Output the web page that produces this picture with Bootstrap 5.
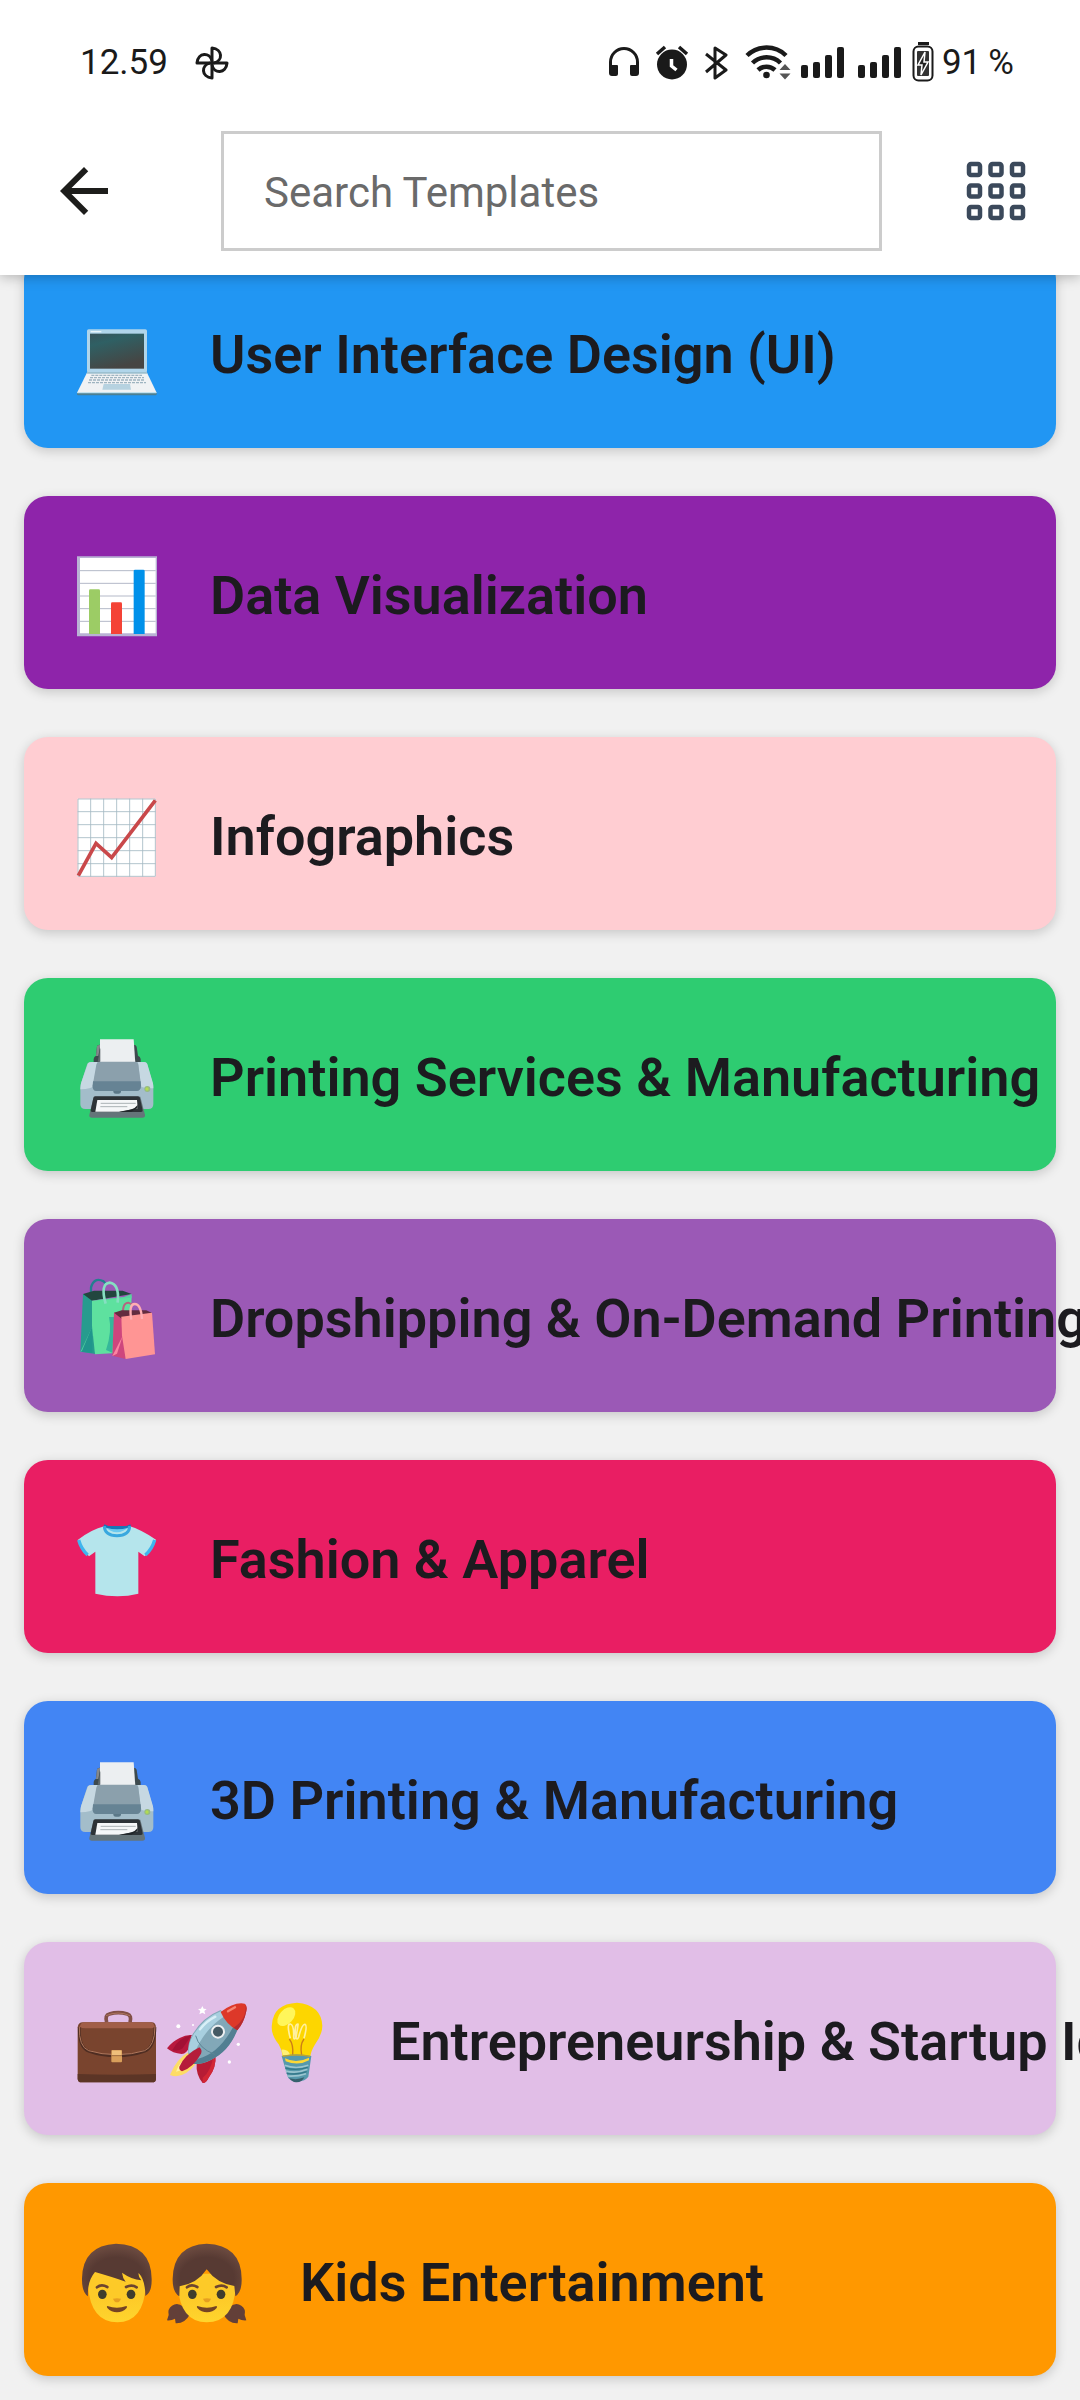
<!DOCTYPE html>
<html lang="en">
<head>
<meta charset="utf-8">
<meta name="viewport" content="width=device-width, initial-scale=1">
<title>Search Templates</title>
<link rel="stylesheet" href="https://cdn.jsdelivr.net/npm/bootstrap@5.3.0/dist/css/bootstrap.min.css">
<style>
  body { font-family: Roboto, "Liberation Sans", sans-serif; background: #f1f1f1; color: #1c1b1f; }
  svg { display: block; flex: none; }
  .app-header { background: #fff; box-shadow: 0 2px 12px rgba(0,0,0,.26); }
  .status-bar { height: 107px; padding: 18px 66px 0 80px; font-size: 35px; line-height: 44px; color: #1a1a1a; }
  .toolbar { padding: 24px 53px 24px 48px; }
  .icon-button { border: 0; padding: 0; background: none; color: #1d1d1b; }
  .search-box { height: 120px; margin: 0 83px 0 101px; padding: 2px 40px 0; border: 3px solid #ccc; border-radius: 0; font-size: 42px; color: #1c1b1f; background: #fff; }
  .search-box::placeholder { color: #6a6a6a; opacity: 1; }
  .category-list { margin-top: -20px; padding: 0 24px 24px; gap: 48px; overflow-x: clip; }
  .category { height: 193px; padding-left: 48px; border: 0; border-radius: 24px; box-shadow: 0 3px 12px rgba(0,0,0,.18); color: #1c1b1f; }
  .category-name { margin-left: 48px; padding-top: 6px; font-size: 54px; line-height: 64px; font-weight: 600; }
  .bg-ui { background: #2196f3; }
  .bg-data { background: #8e24aa; }
  .bg-info-pink { background: #ffcdd2; }
  .bg-print { background: #2ecc71; }
  .bg-drop { background: #9b59b6; }
  .bg-fashion { background: #e91e63; }
  .bg-three { background: #4285f4; }
  .bg-startup { background: #e1bee7; }
  .bg-kids { background: #ff9800; }
</style>
<script src="https://cdn.jsdelivr.net/npm/bootstrap@5.3.0/dist/js/bootstrap.bundle.min.js"></script>
</head>
<body>
<header class="app-header sticky-top">
  <div class="status-bar d-flex align-items-center">
    <span>12.59</span>
    <svg class="ms-4" width="40" height="40" viewBox="-20 -20 40 40" fill="none" stroke="#1a1a1a" stroke-width="3" stroke-linejoin="round" aria-hidden="true">
      <g id="blade"><path d="M0 0V-15C11-14 11-2 2 0"/></g>
      <use href="#blade" transform="rotate(90)"/><use href="#blade" transform="rotate(180)"/><use href="#blade" transform="rotate(270)"/>
    </svg>
    <div class="d-flex align-items-center gap-2 ms-auto">
      <svg width="32" height="44" viewBox="0 0 32 44" aria-hidden="true"><path d="M2.500 28V21a13.500 13.500 0 0 1 27 0V28" fill="none" stroke="#1a1a1a" stroke-width="3"/><path d="M1 24h8a1 1 0 0 1 1 1v8a2 2 0 0 1-2 2H4a3 3 0 0 1-3-3zM31 24h-8a1 1 0 0 0-1 1v8a2 2 0 0 0 2 2h4a3 3 0 0 0 3-3z" fill="#1a1a1a"/></svg>
      <svg width="48" height="44" viewBox="0 0 48 44" aria-hidden="true"><circle cx="24" cy="23.500" r="15" fill="#1a1a1a"/><path d="M9 13l8-7M39 13l-8-7" stroke="#1a1a1a" stroke-width="3.500"/><path d="M23.500 18v7l5 4" fill="none" stroke="#fff" stroke-width="3.500"/></svg>
      <svg width="24" height="44" viewBox="0 0 24 44" fill="none" stroke="#1a1a1a" stroke-width="3" stroke-linejoin="round" aria-hidden="true"><path d="M2 13l20 16-11 8V7l11 7L2 31"/></svg>
      <svg width="56" height="44" viewBox="0 0 56 44" fill="none" stroke="#1a1a1a" stroke-width="4.500" aria-hidden="true"><path d="M11 14.500a28 28 0 0 1 39 0M16.500 22a20 20 0 0 1 28 0M22 29a12.500 12.500 0 0 1 17 0"/><circle cx="30.500" cy="34" r="3.300" fill="#1a1a1a" stroke="none"/><path d="M43.500 29l5.500-6 5.500 6zM43.500 32.500l5.500 6 5.500-6z" fill="#555" stroke="none"/></svg>
      <svg width="46" height="44" viewBox="0 0 46 44" fill="#1a1a1a" aria-hidden="true"><rect x="1" y="24" width="7" height="13" rx="2"/><rect x="13" y="21" width="7" height="16" rx="2"/><rect x="25" y="14" width="7" height="23" rx="2"/><rect x="37" y="6" width="7" height="31" rx="2"/></svg>
      <svg width="50" height="44" viewBox="0 0 50 44" fill="#1a1a1a" aria-hidden="true"><rect x="4" y="24" width="7" height="13" rx="2"/><rect x="16" y="21" width="7" height="16" rx="2"/><rect x="28" y="14" width="7" height="23" rx="2"/><rect x="40" y="6" width="7" height="31" rx="2"/></svg>
      <svg width="22" height="44" viewBox="0 0 22 44" aria-hidden="true"><rect x="6" y="1" width="11" height="3" fill="#1a1a1a"/><rect x="1.500" y="5.500" width="19" height="34" rx="5" fill="none" stroke="#1a1a1a" stroke-width="2"/><rect x="5" y="10" width="12" height="25" rx="1" fill="#333"/><path d="M13 11L6 24h4l-1 10 7-13h-4z" fill="#222" stroke="#fff" stroke-width="1.500"/></svg>
      <span>91&thinsp;%</span>
    </div>
  </div>
  <nav class="toolbar d-flex align-items-center" aria-label="Templates">
    <button type="button" class="icon-button" aria-label="Back">
      <svg width="72" height="72" viewBox="0 0 24 24" fill="currentColor"><path d="M20 11H7.830l5.590-5.590L12 4l-8 8 8 8 1.410-1.410L7.830 13H20v-2z"/></svg>
    </button>
    <input type="search" class="search-box form-control flex-grow-1 w-auto" placeholder="Search Templates" aria-label="Search Templates">
    <button type="button" class="icon-button" aria-label="All categories">
      <svg width="62" height="62" viewBox="0 0 62 62" fill="none" stroke="#3b495b" stroke-width="4.500">
        <rect x="4" y="4" width="11" height="11" rx="2"/><rect x="25.500" y="4" width="11" height="11" rx="2"/><rect x="47" y="4" width="11" height="11" rx="2"/>
        <rect x="4" y="25.500" width="11" height="11" rx="2"/><rect x="25.500" y="25.500" width="11" height="11" rx="2"/><rect x="47" y="25.500" width="11" height="11" rx="2"/>
        <rect x="4" y="47" width="11" height="11" rx="2"/><rect x="25.500" y="47" width="11" height="11" rx="2"/><rect x="47" y="47" width="11" height="11" rx="2"/>
      </svg>
    </button>
  </nav>
</header>

<main class="category-list d-flex flex-column">
  <a href="#ui" class="category bg-ui card flex-row align-items-center text-nowrap text-decoration-none">
    <svg width="90" height="90" viewBox="216 110 270 270" aria-hidden="true">
      <defs><linearGradient id="screen" x1="0" y1="0" x2=".4" y2="1"><stop offset="0" stop-color="#37535a"/><stop offset=".3" stop-color="#2f6064"/><stop offset="1" stop-color="#464543"/></linearGradient></defs>
      <path d="M231 367h239v5q0 3-4 3H235q-4 0-4-3z" fill="#4b7f92"/>
      <rect x="261" y="177" width="180" height="130" rx="5" fill="#b0d5ea"/>
      <rect x="270" y="190" width="162" height="105" fill="url(#screen)"/>
      <path d="M272 184h32" stroke="#e8f5fb" stroke-width="4"/>
      <path d="M262 305h178l30 62H231z" fill="#f0f2f4"/><path d="M262 305h178l3 5H259z" fill="#9cc0d0"/>
      <path d="M274 315h152M270 322h162M267 329h168M264 337h174" stroke="#9eb4c0" stroke-width="4" stroke-dasharray="9 3"/>
      <path d="M311 341h79l3 17h-86z" fill="#b6d2e0"/><path d="M232 367h237" stroke="#c3e2ef" stroke-width="4"/>
    </svg>
    <span class="category-name">User Interface Design (UI)</span>
  </a>
  <a href="#data" class="category bg-data card flex-row align-items-center text-nowrap text-decoration-none">
    <svg width="90" height="90" viewBox="216 833 270 270" aria-hidden="true">
      <path d="M231 858h240v240H231z" fill="#b9b2d4"/><path d="M240 863h227v226H240z" fill="#fff"/>
      <path d="M240 901h227M240 939h227M240 977h227M240 1015h227M240 1053h227" stroke="#b4b9c8" stroke-width="3"/>
      <path d="M267 1091V961q0-4 4-4h25q4 0 4 4v130z" fill="#9ccc65"/><path d="M333 1091v-91q0-4 4-4h25q4 0 4 4v91z" fill="#f44336"/><path d="M401 1091V902q0-4 4-4h25q4 0 4 4v189z" fill="#0091ea"/>
    </svg>
    <span class="category-name">Data Visualization</span>
  </a>
  <a href="#infographics" class="category bg-info-pink card flex-row align-items-center text-nowrap text-decoration-none">
    <svg width="90" height="90" viewBox="36 26 270 270" aria-hidden="true">
      <path d="M53 55h234v234H53z" fill="#fff"/>
      <path d="M54 56h232v232H54zM92 55v234M131 55v234M170 55v234M209 55v234M248 55v234M53 94h234M53 133h234M53 172h234M53 211h234M53 250h234" fill="none" stroke="#a3b8c3" stroke-width="2.500"/>
      <path d="M55 286l53-97 47 43L286 60" fill="none" stroke="#c9484a" stroke-width="11"/>
    </svg>
    <span class="category-name">Infographics</span>
  </a>
  <a href="#printing" class="category bg-print card flex-row align-items-center text-nowrap text-decoration-none">
    <svg width="90" height="90" viewBox="36 29 270 270" aria-hidden="true">
      <defs><g id="printer">
        <path d="M111 78q2-5 8-5h102q7 0 9 6l4 27q7 2 8 10v12H101v-12q1-7 7-10z" fill="#3d4a4e"/>
        <path d="M111 78q2-5 10-5l-6 34h-7z" fill="#84878b"/>
        <path d="M120 57h101l5 72H120z" fill="#eceff1"/><path d="M121 124v-42l-8 42z" fill="#5d686c"/>
        <path d="M82 130q3-5 12-5h157q8 0 10 6l17 58q2 5 2 10v52q0 15-15 15H76q-15 0-15-14v-51q0-6 2-12z" fill="#a3bdca"/>
        <path d="M84 129q3-4 12-4h16l-14 73q-2 8-37 9l2-18zM234 125h18q8 0 10 6l17 58q1 5 1 15-30 0-37-6z" fill="#c6d8e2"/>
        <path d="M119 124h106q8 0 10 9l8 62q0 16-12 17H110q-13-1-12-16l11-63q2-9 10-9z" fill="#8ba0ac"/>
        <path d="M99 183h143l1 12q0 16-12 17H110q-13-1-12-16z" fill="#668394"/>
        <path d="M160 212h23v3q-1 5-7 5h-9q-6 0-7-5z" fill="#5b7888"/>
        <circle cx="262" cy="206" r="9" fill="#96bb82"/><circle cx="261" cy="206" r="5" fill="#b2dc52"/>
        <path d="M101 229h140l14 55q1 8-8 8H96q-9 0-8-8z" fill="#657479"/><path d="M106 228h128q5 0 6 6l8 36q1 5-5 5H97q-6 0-5-5l8-36q1-6 6-6z" fill="#2d3337"/>
        <path d="M112 239h119l2 25-56 10H106z" fill="#f5f7f8"/><path d="M177 274q44-3 56-20v8l-19 12z" fill="#202629"/><path d="M122 249h105M121 259h81" stroke="#aab2b5" stroke-width="3"/>
      </g></defs><use href="#printer"/>
    </svg>
    <span class="category-name">Printing Services &amp; Manufacturing</span>
  </a>
  <a href="#dropshipping" class="category bg-drop card flex-row align-items-center text-nowrap text-decoration-none">
    <svg width="90" height="90" viewBox="36 32 270 270" aria-hidden="true">
      <path d="M93 104V82q8-33 38-19l9 11" fill="none" stroke="#237f8f" stroke-width="7"/>
      <path d="M69 101h27l11 180-46-7z" fill="#279b8e"/><path d="M97 199L61 275l10-6 26-42z" fill="#52cba1"/><path d="M97 197v80l-32-3z" fill="#20958c"/>
      <path d="M69 101l33-10h86l27 10-119 20z" fill="#22463f"/>
      <path d="M96 121l119-13-8 168-102 6-9-85z" fill="#5ee19f"/><path d="M163 170h-16q10 43-9 99l19 8z" fill="#35b89a"/><path d="M96 121l20-3 73-7 26-10v11z" fill="#58d5a0"/>
      <path d="M137 130q-17-60 12-63 30 4 24 60" fill="none" stroke="#86dfc2" stroke-width="8"/>
      <path d="M189 162q-2-35 16-35l13 6" fill="none" stroke="#b66480" stroke-width="6"/>
      <path d="M162 157h28l7 139-40-10z" fill="#ce467d"/><path d="M188 227l-31 60 14-7z" fill="#fc84a2"/>
      <path d="M162 157l23-7h74l17 8-91 17z" fill="#642c3f"/><path d="M184 169l92-12 9 125-88 14-11-70z" fill="#ff9594"/>
      <path d="M214 178q-8-47 10-47 19 0 22 45" fill="none" stroke="#ffadb2" stroke-width="7"/>
    </svg>
    <span class="category-name">Dropshipping &amp; On-Demand Printing</span>
  </a>
  <a href="#fashion" class="category bg-fashion card flex-row align-items-center text-nowrap text-decoration-none">
    <svg width="90" height="90" viewBox="36 35 270 270" aria-hidden="true">
      <path d="M133 72l12 5h54l12-5 3 12-43 14-42-14z" fill="#1976b7"/><path d="M139 82q32 9 66 0l-12 20h-43z" fill="#6bc9ef"/>
      <path d="M133 78q38 36 76 0 30 8 79 40-11 31-34 50l-19-14v126q-61 15-129 0V154l-19 14q-22-22-34-49 42-32 80-41z" fill="#b5e5ec"/>
      <path d="M133 77q1 29 38 29t38-29" fill="none" stroke="#39a8df" stroke-width="9"/>
      <path d="M56 119q8 28 27 45M284 119q-8 28-28 45" fill="none" stroke="#3fb5ed" stroke-width="10"/>
    </svg>
    <span class="category-name">Fashion &amp; Apparel</span>
  </a>
  <a href="#3d-printing" class="category bg-three card flex-row align-items-center text-nowrap text-decoration-none">
    <svg width="90" height="90" viewBox="36 29 270 270" aria-hidden="true"><use href="#printer"/></svg>
    <span class="category-name">3D Printing &amp; Manufacturing</span>
  </a>
  <a href="#startup" class="category bg-startup card flex-row align-items-center text-nowrap text-decoration-none">
    <svg width="90" height="90" viewBox="36 26 270 270" aria-hidden="true">
      <path d="M140 111q-6-22 8-25 27-8 54 0 14 4 8 25" fill="none" stroke="#825047" stroke-width="11"/><path d="M138 91q36-16 72 0" fill="none" stroke="#ab735e" stroke-width="3"/>
      <path d="M68 111h207q12 0 13 15v154q0 11-11 11H65q-12 0-12-11V126q2-15 15-15z" fill="#79442e"/>
      <path d="M53 266q116 4 235 0v14q0 11-11 11H65q-12 0-12-11z" fill="#5c3526"/>
      <path d="M59 124q4-13 15-13h197q10 0 13 13-3 5-15 5H77q-12 0-18-5z" fill="#a15e48"/>
      <path d="M58 126q-2 60 28 72 38 14 84 14t84-14q30-12 31-72" fill="none" stroke="#4e2d22" stroke-width="8"/>
      <path d="M58 124q-2 60 28 72 38 12 84 12t84-12q30-12 31-72" fill="none" stroke="#b0775c" stroke-width="3"/>
      <rect x="154" y="194" width="32" height="37" rx="3" fill="#d99f5b"/><path d="M156 196h28v14h-28z" fill="#efbf7b"/><path d="M154 211h32" stroke="#9f6b3f" stroke-width="3"/>
    </svg>
    <svg width="90" height="90" viewBox="306 26 270 270" aria-hidden="true">
      <path d="M387 200q-38 20-57 69 38 15 78-34z" fill="#fddc65"/><path d="M386 213q-28 17-38 46 31-4 50-31z" fill="#fff3a5"/>
      <path d="M395 149q-18-1-36 9-22 10-38 31 17 15 44 17 16-2 23-22z" fill="#b8193e"/><path d="M395 149q-40 8-58 45 18 5 31-5z" fill="#a21135"/>
      <path d="M410 233q-3 35 18 60 9 2 18-16 24-31 20-68z" fill="#b71c35"/><path d="M460 214q-7 43-32 63v15q10 2 18-15 24-31 20-68z" fill="#d22635"/>
      <path d="M385 205q-4-27 12-57 30-52 85-74l51 57q-26 65-79 92-33 17-56 12z" fill="#82a8b8"/>
      <path d="M386 202q-2-27 14-54 34-52 82-70l13 14q-60 37-91 110z" fill="#a8cfdf"/><path d="M415 220q64-16 109-103l9 14q-24 66-79 92-32 16-56 12z" fill="#527f92"/>
      <path d="M407 151q10 39 57 56" fill="none" stroke="#5c8797" stroke-width="3"/><path d="M420 132q18-24 46-38" stroke="#d8eff7" stroke-width="7" fill="none" stroke-linecap="round"/>
      <path d="M482 80q41-31 72-25 8 5 5 22-7 35-27 58-34-18-50-55z" fill="#dd3829"/><path d="M557 58q4 42-36 69l11 8q20-23 27-58 2-12-2-19z" fill="#b52b30"/><path d="M504 78l21-12" stroke="#f68472" stroke-width="7" stroke-linecap="round"/>
      <circle cx="474" cy="139" r="18" fill="#455a64" stroke="#eceff1" stroke-width="6"/>
      <path d="M418 186q10 8 5 19-21 39-57 53-10-5-8-14 17-37 60-58z" fill="#b51d3b"/>
      <path d="M427 62l4 8 9 1-7 6 3 10-9-5-9 5 3-10-7-6 9-1z" fill="#fff"/><g fill="#fff"><circle cx="355" cy="123" r="6"/><circle cx="535" cy="177" r="5"/><circle cx="508" cy="230" r="5"/><circle cx="399" cy="119" r="3"/></g>
    </svg>
    <svg width="90" height="90" viewBox="576 26 270 270" aria-hidden="true">
      <path d="M668 213q-1-18-12-36-25-31-20-60 4-61 75-65 73 7 76 69 0 27-23 58-12 20-13 35-43 14-83-1z" fill="#fdd600"/>
      <path d="M665 193q21-2 26 18l-23-2z" fill="#fff176"/><ellipse cx="679" cy="94" rx="21" ry="33" fill="#fff65a" transform="rotate(42 679 94)"/>
      <path d="M698 210q3-32-10-49M725 210q-6-32 7-49" fill="none" stroke="#cc7d16" stroke-width="4"/>
      <path d="M691 159q-12-44 0-43 11 2 10 38 0 12 7 2 7-40 6-40-12 0-7 39 4 12 9 0 10-40 19-38 8 3-3 42" fill="none" stroke="#fff0a0" stroke-width="5" stroke-linejoin="round"/>
      <path d="M665 212q43-9 89 0l-9 62q-18 23-57 7-4-3-6-11l-9-30z" fill="#5699ac"/><path d="M675 219q34 17 72-2v8q-32 18-70 3z" fill="#fdd835"/>
      <path d="M674 240q34 13 71 0M677 257q32 9 65-5M682 272q30 2 56-7" fill="none" stroke="#9bc5cf" stroke-width="5"/><path d="M676 248q32 9 67-2M680 264q31 6 60-5" fill="none" stroke="#347889" stroke-width="4"/>
      <path d="M688 279q23 6 45-3-7 16-25 15-13-1-20-12z" fill="#36606d"/><path d="M668 213q42-8 82 0" fill="none" stroke="#bba335" stroke-width="4"/>
    </svg>
    <span class="category-name">Entrepreneurship &amp; Startup Ideas</span>
  </a>
  <a href="#kids" class="category bg-kids card flex-row align-items-center text-nowrap text-decoration-none">
    <svg width="90" height="90" viewBox="36 29 270 270" aria-hidden="true">
      <defs>
        <radialGradient id="hair" cx=".5" cy=".65" r=".6"><stop offset=".65" stop-color="#573a33"/><stop offset="1" stop-color="#6b4a3f"/></radialGradient>
        <linearGradient id="skin" x1="0" y1="0" x2="0" y2="1"><stop offset=".5" stop-color="#fdca28"/><stop offset="1" stop-color="#ffd52d"/></linearGradient>
        <g id="features"><path d="M111 186q13-11 31-1M198 185q18-9 32 1" fill="none" stroke="#6d452f" stroke-width="8" stroke-linecap="round"/><ellipse cx="127" cy="207" rx="13" ry="14" fill="#3f3c2d"/><ellipse cx="213" cy="207" rx="13" ry="14" fill="#3f3c2d"/><path d="M159 220q12-3 24 0-4 11-12 11t-12-11z" fill="#e69f20"/><path d="M142 242q29 10 57 0 4 1 1 6-12 13-29 13t-29-13q-3-5 0-6z" fill="#744424"/></g>
      </defs>
      <path d="M83 140h174q8 150-85 151-94-1-89-151z" fill="url(#skin)"/>
      <path d="M84 213q-19-12-18-54 2-99 102-104 106 3 107 106 1 41-19 51 0-48-20-69-2 12 8 22-30-3-58-23 2 17 11 27-40-14-92-29-24 28-21 73z" fill="url(#hair)"/>
      <use href="#features"/>
    </svg>
    <svg width="90" height="90" viewBox="306 29 270 270" aria-hidden="true">
      <path d="M370 244q-18-15-34-3-14 9-10 28l-5 16q14 1 24-5l2 14q27 2 44-29zM510 244q18-15 34-3 14 9 10 28l5 16q-14 1-24-5l-2 14q-27 2-44-29z" fill="#633f38"/>
      <path d="M353 145h174q8 145-87 146-92-1-87-146z" fill="url(#skin)"/>
      <path d="M358 213q-21-12-20-53 2-101 102-105 104 4 105 105 1 41-19 53l-3-31q-52-7-83-50-27 42-81 51z" fill="url(#hair)"/>
      <use href="#features" x="270"/>
    </svg>
    <span class="category-name">Kids Entertainment</span>
  </a>
</main>
</body>
</html>
